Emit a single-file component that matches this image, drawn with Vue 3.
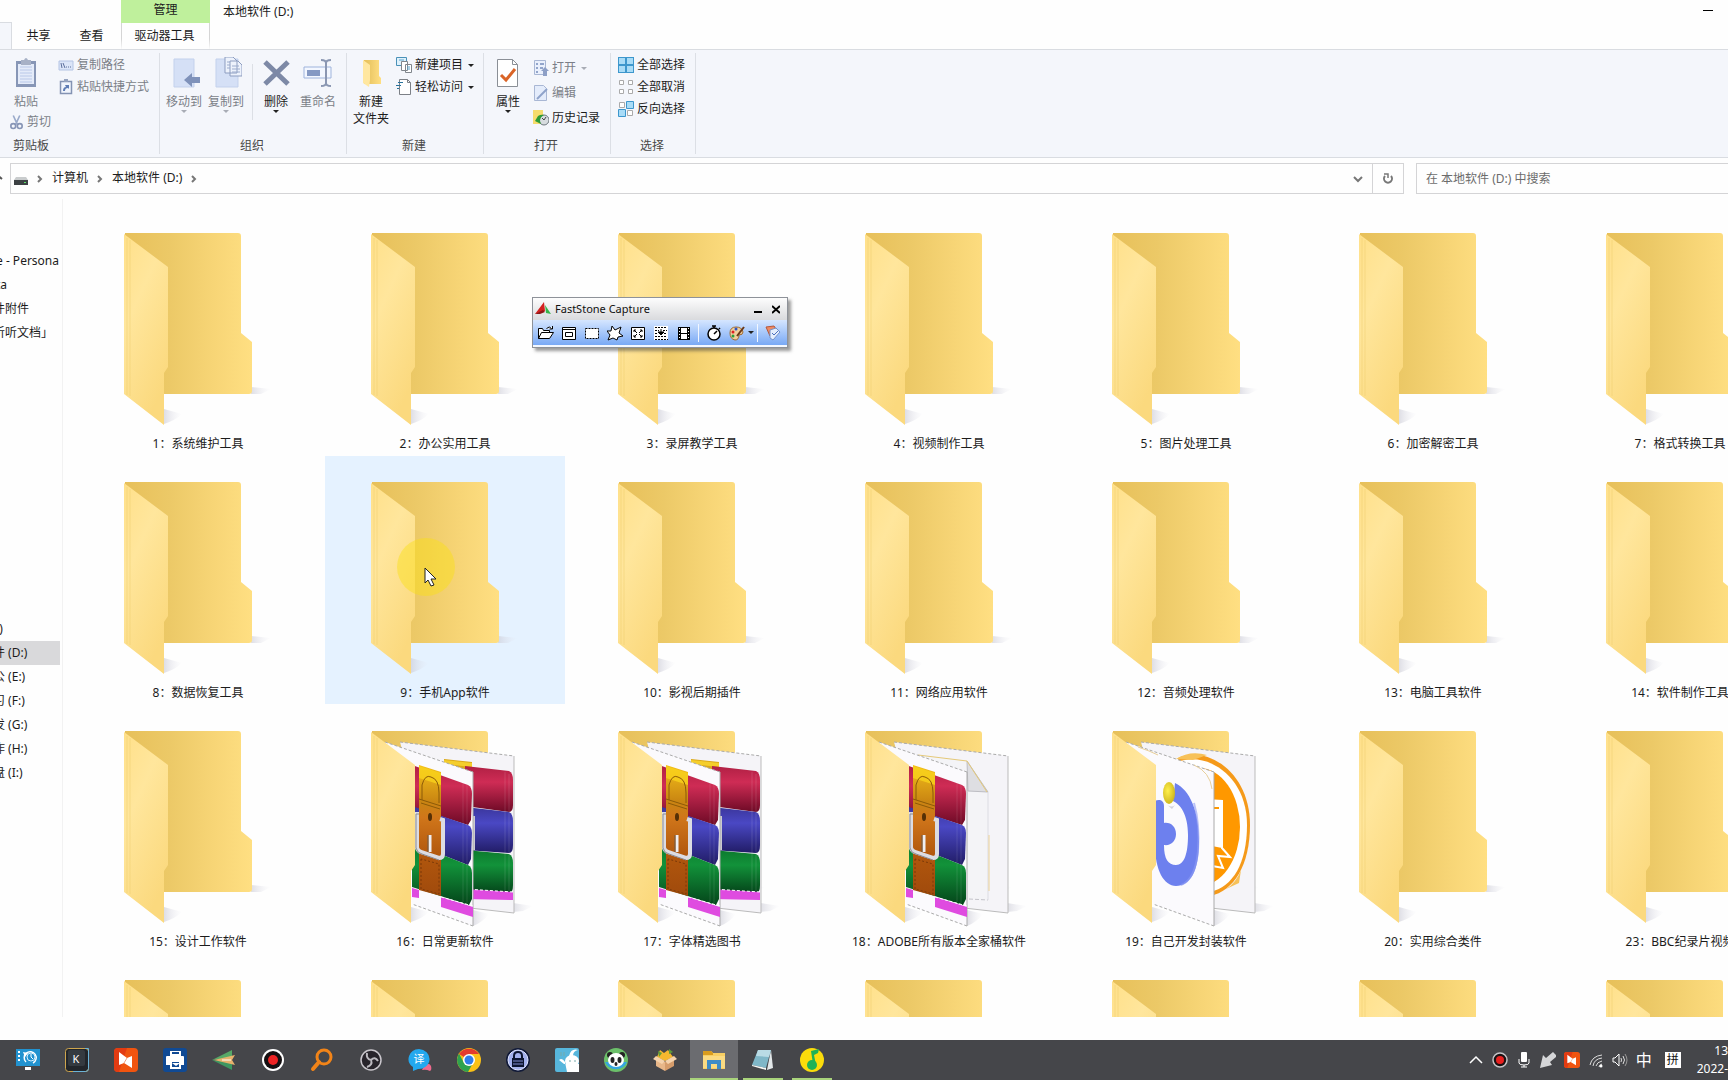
<script setup>
import { ref } from 'vue'

const search = ref('')
const hovered = ref(8)

const quickLinks = [
    { text: 'e - Persona', latin: true },
    { text: 'ta', latin: true },
    { text: '件附件' },
    { text: '听听文档」' },
]
const drives = ['  )', '件 (D:)', '公 (E:)', '习 (F:)', '发 (G:)', '作 (H:)', '盘 (I:)']

const folders = [
    { name: '1：系统维护工具' },
    { name: '2：办公实用工具' },
    { name: '3：录屏教学工具' },
    { name: '4：视频制作工具' },
    { name: '5：图片处理工具' },
    { name: '6：加密解密工具' },
    { name: '7：格式转换工具' },
    { name: '8：数据恢复工具' },
    { name: '9：手机App软件' },
    { name: '10：影视后期插件' },
    { name: '11：网络应用软件' },
    { name: '12：音频处理软件' },
    { name: '13：电脑工具软件' },
    { name: '14：软件制作工具' },
    { name: '15：设计工作软件' },
    { name: '16：日常更新软件', kind: 'rar' },
    { name: '17：字体精选图书', kind: 'rar' },
    { name: '18：ADOBE所有版本全家桶软件', kind: 'doc' },
    { name: '19：自己开发封装软件', kind: 'app' },
    { name: '20：实用综合类件' },
    { name: '23：BBC纪录片视频' },
    {}, {}, {}, {}, {}, {}, {},
]

const captureTools = ['open', 'window', 'rect', 'star', 'full', 'scroll', 'film']

const apps = [
    { id: 'backup' }, { id: 'keyk', glyph: 'K' }, { id: 'kl' }, { id: 'printer' }, { id: 'plane' },
    { id: 'rec' }, { id: 'find' }, { id: 'obs' }, { id: 'trans', glyph: '译' }, { id: 'chrome' },
    { id: 'lock' }, { id: 'rabbit' }, { id: 'panda' }, { id: 'box' },
    { id: 'explorer', state: 'active' }, { id: 'notes', state: 'running' }, { id: 'music', state: 'running' },
]
</script>

<template>
    <!-- shared icon shapes -->
    <svg class="defs" width="0" height="0" aria-hidden="true">
        <defs>
            <linearGradient id="gBack" x1="0" y1="0" x2="1" y2="0">
                <stop offset="0" stop-color="#e7c05a" />
                <stop offset=".35" stop-color="#ecc967" />
                <stop offset=".7" stop-color="#f7d576" />
                <stop offset="1" stop-color="#ffdf82" />
            </linearGradient>
            <linearGradient id="gFront" x1="0" y1="0" x2=".5" y2="1">
                <stop offset="0" stop-color="#ffe08a" />
                <stop offset=".4" stop-color="#ffe69c" />
                <stop offset="1" stop-color="#fbd97e" />
            </linearGradient>
            <linearGradient id="gShade" x1="0" y1="0" x2="1" y2="0">
                <stop offset="0" stop-color="#c9c9d4" stop-opacity=".6" />
                <stop offset="1" stop-color="#e5e5ee" stop-opacity="0" />
            </linearGradient>
            <linearGradient id="gRed" x1="0" y1="0" x2="0" y2="1">
                <stop offset="0" stop-color="#b02044" />
                <stop offset=".35" stop-color="#cf2c55" />
                <stop offset="1" stop-color="#6e0a26" />
            </linearGradient>
            <linearGradient id="gBlue" x1="0" y1="0" x2="0" y2="1">
                <stop offset="0" stop-color="#3b369c" />
                <stop offset=".35" stop-color="#4a48c4" />
                <stop offset="1" stop-color="#211c66" />
            </linearGradient>
            <linearGradient id="gGreen" x1="0" y1="0" x2="0" y2="1">
                <stop offset="0" stop-color="#0d7a2e" />
                <stop offset=".35" stop-color="#12923a" />
                <stop offset="1" stop-color="#04451a" />
            </linearGradient>
            <linearGradient id="gStrap" x1="0" y1="0" x2="0" y2="1">
                <stop offset="0" stop-color="#f3c01a" />
                <stop offset=".28" stop-color="#c98512" />
                <stop offset=".4" stop-color="#d0761a" />
                <stop offset=".7" stop-color="#b0560d" />
                <stop offset="1" stop-color="#a04a0c" />
            </linearGradient>
            <radialGradient id="gTime" cx=".4" cy=".4" r=".6">
                <stop offset="0" stop-color="#fff04a" />
                <stop offset="1" stop-color="#d0b820" />
            </radialGradient>
        </defs>

        <symbol id="f-back" viewBox="0 0 240 224">
            <path d="M173 187v-7l20 2-10 5z" fill="url(#gShade)" />
            <path d="M47 26h113q3 0 3 3v97l11 9v49q0 3-3 3H47z" fill="url(#gBack)" />
        </symbol>
        <symbol id="f-front" viewBox="0 0 240 224">
            <path d="M86 217v-15l18 5q-6 6-18 10z" fill="url(#gShade)" />
            <path d="M46 27l44 33v100l-4 6v52l-40-31z" fill="url(#gFront)" />
            <path d="M49 31v157M52 33v156" stroke="#eecb6a" stroke-width="1" opacity=".45" />
        </symbol>
        <symbol id="f-pages-back" viewBox="0 0 240 224">
            <path d="M188 207v-9l20 3-10 5z" fill="url(#gShade)" />
            <path d="M75 37l114 14v157l-70-8z" fill="#f5f4f8" />
            <path d="M75 37l114 14" stroke="#aaa" stroke-dasharray="3 2" fill="none" />
            <path d="M189 51v157l-44-5" stroke="#bbb" stroke-width="1" fill="none" />
        </symbol>
        <symbol id="f-page-front" viewBox="0 0 240 224">
            <path d="M148 221v-16l16 4q-6 8-16 12z" fill="url(#gShade)" />
            <path d="M60 37l88 30v154l-61-22z" fill="#fbfafd" />
            <path d="M60 37l88 30M148 221l-61-22" stroke="#aaa" stroke-dasharray="3 2" fill="none" />
            <path d="M148 67v154" stroke="#aaa" />
        </symbol>
        <symbol id="f-books-back" viewBox="0 0 240 224">
            <path d="M119 54l28 3v14h-28z" fill="#dba818" />
            <path d="M119 55l28 3v4l-28-3z" fill="#f5ce2c" />
            <path d="M140 61l44 5q4 2 4 9v25q0 7-4 7l-44-6z" fill="url(#gRed)" />
            <path d="M140 102l44 5q4 2 4 9v24q0 8-4 8l-44-3z" fill="url(#gBlue)" />
            <path d="M140 145l44 4q4 2 4 9v22q0 8-4 8h-44z" fill="url(#gGreen)" />
            <path d="M140 184l48 3v8l-48-1z" fill="#df4be0" />
            <path d="M140 184l48 3" stroke="#fff" stroke-dasharray="3 2" />
            <path d="M180 67v120M184 69v117" stroke="#fff" opacity=".12" />
            <path d="M149 111v34" stroke="#c9c9d0" stroke-width="2" />
        </symbol>
        <symbol id="f-books-front" viewBox="0 0 240 224">
            <path d="M87 60l56 20q4 2 4 9l-1 26-3 5-56-18z" fill="url(#gRed)" />
            <path d="M87 101l56 19q4 2 4 8l-1 26-3 6-56-22z" fill="url(#gBlue)" />
            <path d="M87 138l56 22q4 2 4 8v26l-3 6-57-18z" fill="url(#gGreen)" />
            <path d="M87 183l7 2v8l-7-1zM116 192l32 10v10l-32-10z" fill="#df4be0" />
            <path d="M116 192l32 9" stroke="#fff" stroke-dasharray="3 2" />
            <path d="M138 78v119M142 80v118" stroke="#fff" opacity=".1" />
            <path d="M94 60l22 7v124l-22-6z" fill="url(#gStrap)" />
            <path d="M94 61l22 7v12l-22-7z" fill="#f9d21c" opacity=".8" />
            <path d="M97 95V80q3-11 9-8 8 2 8 16v10M94 94l22 7M96 98l19 6" fill="none" stroke="#8c5a08" />
            <path d="M96 154v30l18 5v-30z" fill="none" stroke="#7b3908" stroke-dasharray="2 2" />
            <path d="M94 109h-2v34q1 3 4 4l18 6q4 0 4-4v-34l-3-1" fill="none" stroke="#dcdce2" stroke-width="4" />
            <path d="M94 109h-3v34q1 5 6 6l17 6" fill="none" stroke="#8b8b92" />
            <ellipse cx="105" cy="112" rx="2" ry="4" fill="#553006" />
            <path d="M105 130v17" stroke="#eeeef2" stroke-width="3" />
            <path d="M103 130v17" stroke="#6b5a4a" />
        </symbol>
        <symbol id="f-doc" viewBox="0 0 240 224">
            <path d="M99 50l49 6 21 32v107l-30-2z" fill="#f4f4f7" />
            <path d="M148 56l21 31-20-1z" fill="#dedee2" stroke="#bdbdc3" />
            <path d="M99 50l49 6 20 31" fill="none" stroke="#e5c979" />
            <path d="M150 194l19 1" stroke="#c4c4ca" stroke-dasharray="4 2" />
            <path d="M169 87v108" stroke="#dcdce2" />
            <path d="M170 130v56" stroke="#ecd296" />
        </symbol>
        <symbol id="f-orange" viewBox="0 0 240 224">
            <path d="M112 53C140 40 184 66 184 120c0 40-16 66-40 71z" fill="#f59a1a" />
            <path d="M112 57C140 46 181 70 181 120c0 38-14 62-37 67z" fill="#fff" />
            <path d="M110 54q14-9 31-4l-14 5zM160 184q10-6 15-19l-2 13z" fill="#f7c158" />
            <ellipse cx="133" cy="122" rx="41" ry="59" fill="#ff9800" />
            <path d="M140 95l16 1v47l8 9-12-1 5 12-16-3M149 102h4" fill="none" stroke="#fff" stroke-width="2" />
            <path d="M141 95l15 1v47l-15-3z" fill="#fff" />
            <path d="M148 103h5" stroke="#ff9800" stroke-width="2" />
        </symbol>
        <symbol id="f-blue" viewBox="0 0 240 224">
            <path d="M109 78C124 85 133 106 133 137c0 29-9 44-23 44-12 0-21-16-21-41V96c4-2 9-1 9 5v17c7-1 12 4 12 11s-5 12-12 11c0 14 4 20 12 20 8 0 12-11 12-30 0-21-8-31-15-34z" fill="#6d80ee" />
            <path d="M128 98q6 21 4 48-3 29-17 34" fill="none" stroke="#8d9bf4" stroke-width="2" opacity=".6" />
            <ellipse cx="103" cy="88" rx="6" ry="11" fill="url(#gTime)" />
            <path d="M99 98q6 6 10 2l-3 4z" fill="#b8b8c4" opacity=".6" />
            <path d="M72 42q12 4 20 8M128 60q16 7 18 24" fill="none" stroke="#e8cf9a" />
        </symbol>

        <!-- ribbon -->
        <symbol id="paste" viewBox="0 0 32 32">
            <path d="M6 4h20v26H6z" fill="#8796b6" />
            <path d="M8 7h16v20H8z" fill="#e4ebf9" />
            <path d="M10 10h12M10 13h12M10 16h12M10 19h12M10 22h12M10 25h12" stroke="#b9c8e8" />
            <path d="M11 3h3q2-4 4 0h3v5H11z" fill="#a7b1c6" />
        </symbol>
        <symbol id="cut" viewBox="0 0 16 18">
            <path d="M4 1l5 11M12 1L7 12" stroke="#9aaaca" stroke-width="2" fill="none" />
            <circle cx="4" cy="14" r="3" fill="none" stroke="#8795b6" stroke-width="2" />
            <circle cx="12" cy="14" r="3" fill="none" stroke="#8795b6" stroke-width="2" />
        </symbol>
        <symbol id="path" viewBox="0 0 16 16">
            <path d="M1 4h14v9H1z" fill="#dbe5f8" stroke="#b4c4e4" />
            <path d="M3 6l1 5M5 6l2 5M8 10h1M10 10h1M12 10h1" stroke="#5b6e9c" />
        </symbol>
        <symbol id="shortcut" viewBox="0 0 16 16">
            <path d="M2.500 2.500h11v12h-11z" fill="#f1f5fd" stroke="#8493b3" stroke-width="1.500" />
            <path d="M6 0h4v3H6z" fill="#95a3bf" />
            <path d="M5 12q0-4 3-4L7 6h4v4l-1-1q-3 0-3 3z" fill="#5f7db5" />
        </symbol>
        <symbol id="move" viewBox="0 0 32 32">
            <path d="M6 2h20v28H6z" fill="#d5e0f6" stroke="#c3d1ec" />
            <path d="M16 23l8-7v4h8v6h-8v4z" fill="#7f92ba" />
        </symbol>
        <symbol id="copy" viewBox="0 0 32 32">
            <path d="M6 2h22v28H6z" fill="#d5e0f6" stroke="#c3d1ec" />
            <path d="M15 0h8l4 4v12H15zM20 4h8l4 4v11H20z" fill="#edf2fc" stroke="#8d9dc0" />
            <path d="M17 5h3M17 8h3M17 11h3M22 9h7M22 12h8M22 15h8" stroke="#9caccd" />
        </symbol>
        <symbol id="delete" viewBox="0 0 32 32">
            <path d="M5 5l23 22M28 5L5 27" stroke="#7d89a6" stroke-width="5" />
        </symbol>
        <symbol id="rename" viewBox="0 0 32 32">
            <path d="M2 10h27v11H2z" fill="#f3f7ff" stroke="#9fb4dc" stroke-width="1" />
            <path d="M5 13h13v6H5z" fill="#8599c3" />
            <path d="M19 3q5 0 5 3 0-3 5-3M24 5v22M19 29q5 0 5-3 0 3 5 3" fill="none" stroke="#8b97b2" stroke-width="2" />
        </symbol>
        <symbol id="newfolder" viewBox="0 0 32 32">
            <path d="M9 3h15v16l2 2v6H9z" fill="url(#gBack)" />
            <path d="M8 3l7 5v15l-1 7-6-4z" fill="#ffe7a0" />
        </symbol>
        <symbol id="newitem" viewBox="0 0 16 16">
            <path d="M.5.5h10v8H.5z" fill="#dff1fb" stroke="#4a91b8" />
            <path d="M5.500 4.500h6v9h-6zM9.500 7.500h6v8h-6z" fill="#fff" stroke="#80868d" />
            <path d="M3 3h5M11 10h3M11 12h3" stroke="#5ba4cc" />
        </symbol>
        <symbol id="easy" viewBox="0 0 16 16">
            <path d="M3.500.5h8l3 3v12h-11z" fill="#fff" stroke="#7c8086" />
            <path d="M11.500.5v3h3" fill="none" stroke="#7c8086" />
            <path d="M2 3.500h5M0 6.500h5M1 9.500h2" stroke="#28739c" stroke-width="1" />
        </symbol>
        <symbol id="props" viewBox="0 0 32 32">
            <path d="M5.500 2.500h15l5 5v22h-20z" fill="#fff" stroke="#8a8f96" />
            <path d="M20.500 2.500v5h5" fill="none" stroke="#8a8f96" />
            <path d="M9 18l5 5 9-11" fill="none" stroke="#da6427" stroke-width="3" />
        </symbol>
        <symbol id="openicon" viewBox="0 0 16 16">
            <path d="M1.500.5h11v14h-11z" fill="#eaf0fc" stroke="#a9b7d4" />
            <path d="M3 3h2v2H3zM3 7h2v2H3zM3 11h2v2H3zM7 3h4v2H7zM7 7h3v2H7z" fill="#92a5cb" />
            <path d="M8 11l4-4 4 4h-2v5h-4v-5z" fill="#8d9fc6" />
        </symbol>
        <symbol id="edit" viewBox="0 0 16 16">
            <path d="M1.500.5h9l3 3v12h-12z" fill="#e4ecfb" stroke="#a9b7d4" />
            <path d="M4 14L14 4" stroke="#8fa3ca" stroke-width="2" />
        </symbol>
        <symbol id="history" viewBox="0 0 16 16">
            <path d="M0 0h10v14H0z" fill="#f6dc6d" />
            <circle cx="11" cy="10" r="5" fill="#d7dcdf" stroke="#6d777d" />
            <path d="M11 10l2-3M9 8l2 2" stroke="#444" fill="none" />
            <path d="M2 11l3-5q3-2 6-1-4 2-4 6l1 3z" fill="#2e9b36" />
        </symbol>
        <symbol id="selall" viewBox="0 0 16 16">
            <path d="M0 0h16v16H0z" fill="#3d97cd" />
            <path d="M1 1h6v6H1zM9 1h6v6H9zM1 9h6v6H1zM9 9h6v6H9z" fill="#a9dcf7" />
        </symbol>
        <symbol id="selnone" viewBox="0 0 16 16">
            <path d="M1.500 1.500h4v4h-4zM10.500 1.500h4v4h-4zM1.500 10.500h4v4h-4zM10.500 10.500h4v4h-4z" fill="#fff" stroke="#aaa" />
        </symbol>
        <symbol id="selinv" viewBox="0 0 16 16">
            <path d="M1.500 1.500h5v5h-5zM9.500 9.500h5v5h-5z" fill="#fff" stroke="#aaa" />
            <path d="M8.500.5h7v7h-7zM.5 8.500h7v7h-7z" fill="#a9dcf7" stroke="#3d97cd" />
        </symbol>
        <symbol id="chev" viewBox="0 0 8 10">
            <path d="M2 2l3 3-3 3" fill="none" stroke="#777" stroke-width="2" />
        </symbol>

        <!-- capture toolbar -->
        <symbol id="c-open" viewBox="0 0 16 16">
            <path d="M.5 13.500v-10h4l1 2h6v2M.5 13.500l3-6h12l-4 6zM8.500 3.500q3-3 5 0M14.500 1v3h-3" fill="#fff" stroke="#000" />
        </symbol>
        <symbol id="c-window" viewBox="0 0 16 16">
            <path d="M1.500 2.500h13v12h-13z" fill="#fff" stroke="#000" />
            <path d="M1 4.500h14M4.500 7.500h7v4h-7z" fill="none" stroke="#000" stroke-width="1" />
        </symbol>
        <symbol id="c-rect" viewBox="0 0 16 16">
            <path d="M1.500 3.500h13v10h-13z" fill="#fff" stroke="#000" stroke-dasharray="2 1" />
        </symbol>
        <symbol id="c-star" viewBox="0 0 16 16">
            <path d="M5 1l3 4 6-3-2 6 4 3-5 1-1 3-4-2-5 2 2-5-3-4h4z" fill="#fff" stroke="#000" />
        </symbol>
        <symbol id="c-full" viewBox="0 0 16 16">
            <path d="M1.500 2.500h13v12h-13z" fill="#fff" stroke="#000" />
            <path d="M4 5l3 3M12 5L9 8M4 12l3-3M12 12L9 9M4 7V5h2M10 5h2v2M4 10v2h2M10 12h2v-2" fill="none" stroke="#000" />
        </symbol>
        <symbol id="c-scroll" viewBox="0 0 16 16">
            <path d="M1 1h14v14H1z" fill="#fff" />
            <path d="M2 2.500h12M2 5.500h4M10 5.500h4M2 8.500h3M11 8.500h3M2 11.500h12M2 14.500h13" stroke="#000" stroke-dasharray="2 1" />
            <path d="M8 4v5M5 7l3 3 3-3z" fill="#000" stroke="#000" />
        </symbol>
        <symbol id="c-film" viewBox="0 0 16 16">
            <path d="M2 2h3v13H2zM11 2h3v13h-3z" fill="#000" />
            <path d="M5 3h6v11H5z" fill="#fff" />
            <path d="M5 8.500h6M5 2.500h6M5 14.500h6" stroke="#000" />
            <path d="M3.500 3v12M12.500 3v12" stroke="#fff" stroke-dasharray="1 2" />
        </symbol>
        <symbol id="c-timer" viewBox="0 0 16 16">
            <circle cx="8" cy="9" r="6" fill="#fff" stroke="#000" stroke-width="1.500" />
            <path d="M8 9l3-3M6 1h4M8 1v2M13 3l1 1" stroke="#000" stroke-width="1.500" />
        </symbol>
        <symbol id="c-palette" viewBox="0 0 16 16">
            <path d="M1 8q0-6 6-6t7 5q0 3-4 3 0 5-4 5Q1 14 1 8z" fill="#f1cf9c" stroke="#9c6a32" />
            <circle cx="4" cy="7" r="1.500" fill="#d22" />
            <circle cx="7" cy="4" r="1.500" fill="#2a53c8" />
            <circle cx="4" cy="11" r="1.500" fill="#29a03a" />
            <path d="M15 2l-7 9" stroke="#6b3a17" stroke-width="2" />
        </symbol>
        <symbol id="c-cfg" viewBox="0 0 16 16">
            <path d="M1 2l8-1 2 3-6 7z" fill="#ee8a63" stroke="#b3573b" />
            <path d="M5 5l6-2 4 4-7 8-3-2z" fill="#e4eefc" stroke="#7592c9" />
            <path d="M7 8l2 2 4-4" fill="none" stroke="#4a6fbd" />
        </symbol>

        <!-- taskbar -->
        <symbol id="t-backup" viewBox="0 0 24 24">
            <path d="M0 1h24v17H0z" fill="#2292cf" />
            <path d="M9 19h6v3H9z" fill="#fff" />
            <path d="M2 3h2v2H2zM2 7h2v2H2zM2 11h2v2H2z" fill="#fff" />
            <path d="M10 14A6 6 0 1 1 17 15" fill="none" stroke="#fff" stroke-width="1.500" />
            <circle cx="15" cy="9" r="4" fill="#2292cf" stroke="#d8efff" />
            <path d="M15 6v3l2 2" stroke="#fff" fill="none" />
            <path d="M7 4l5 1-3 4z" fill="#fff" />
        </symbol>
        <symbol id="t-keyk" viewBox="0 0 24 24">
            <rect x=".5" y=".5" width="23" height="23" rx="3" fill="#22262b" stroke="#cfa64e" />
            <path d="M20 .5h3.500v20q0 3-3 3H8" fill="none" stroke="#6ab3d8" />
            <rect x="3" y="2" width="17" height="16" rx="2" fill="#343a40" />
        </symbol>
        <symbol id="t-kl" viewBox="0 0 24 24">
            <rect width="24" height="24" rx="4" fill="#f0540f" />
            <path d="M0 4q0-4 4-4h9L5 24H4q-4 0-4-4z" fill="#e23b12" />
            <path d="M5 4l8 6 5-2v12l-8-5-5 2z" fill="#fff" />
            <path d="M13 10l-3 5" stroke="#f0a080" />
        </symbol>
        <symbol id="t-printer" viewBox="0 0 24 24">
            <rect width="24" height="24" rx="3" fill="#104a94" />
            <path d="M7 3h11v5H7zM4 8q-1 0-1 1v8h4v-3h11v3h3V9q0-1-1-1z" fill="#fff" />
            <path d="M8 14v6h9v-6" fill="none" stroke="#fff" stroke-width="2" />
            <path d="M9 5h7" stroke="#104a94" stroke-width="2" />
            <path d="M9 15l4 3 4-3z" fill="#fff" />
        </symbol>
        <symbol id="t-plane" viewBox="0 0 24 24">
            <path d="M0 12L20 2v8z" fill="#57a867" />
            <path d="M0 12l20 10v-8z" fill="#3e9661" />
            <path d="M2 12l21-5-3 5 3 5z" fill="#e7b26d" />
            <path d="M10 12h9" stroke="#fff" stroke-width="1" />
        </symbol>
        <symbol id="t-rec" viewBox="0 0 24 24">
            <circle cx="12" cy="12" r="11" fill="#fff" />
            <circle cx="12" cy="12" r="9" fill="#151012" />
            <circle cx="12" cy="12" r="5" fill="#ee2324" />
        </symbol>
        <symbol id="t-find" viewBox="0 0 24 24">
            <circle cx="14" cy="9" r="7" fill="none" stroke="#f28418" stroke-width="3" />
            <path d="M9 14l-6 7" stroke="#f28418" stroke-width="4" stroke-linecap="round" />
        </symbol>
        <symbol id="t-obs" viewBox="0 0 24 24">
            <circle cx="12" cy="12" r="10" fill="#27242b" stroke="#c9c6cc" stroke-width="1.500" />
            <path d="M12 12q-5-1-4-7M12 12q4-4 7 1M12 12q2 5-4 7" fill="none" stroke="#bcbac0" stroke-width="2" />
        </symbol>
        <symbol id="t-trans" viewBox="0 0 24 24">
            <path d="M17 16q5-1 6 2 1 4-1 5-4-2-8-1z" fill="#ef6a8e" />
            <path d="M11 1a11 10 0 1 1-1 20l-5 2v-4A11 10 0 0 1 11 1z" fill="#23a8ee" />
        </symbol>
        <symbol id="t-chrome" viewBox="0 0 24 24">
            <circle cx="12" cy="12" r="12" fill="#fbc116" />
            <path d="M12 12L2 6A12 12 0 0 1 22 6H12z" fill="#e33b2e" />
            <path d="M2 5.500A12 12 0 0 0 11 24l5-9-9 0z" fill="#2fa24f" />
            <circle cx="12" cy="12" r="6" fill="#fff" />
            <circle cx="12" cy="12" r="4.500" fill="#2f7de9" />
        </symbol>
        <symbol id="t-lock" viewBox="0 0 24 24">
            <circle cx="12" cy="12" r="11" fill="#a3b1ee" stroke="#111a38" stroke-width="2" />
            <circle cx="12" cy="12" r="10" fill="none" stroke="#dfe5ff" />
            <path d="M8 11V8q0-4 4-4t4 4v3" fill="none" stroke="#0c1530" stroke-width="2" />
            <path d="M6 10h12v9H6z" fill="#0c1530" />
            <path d="M7 13h10M7 16h10" stroke="#7e8cd0" />
        </symbol>
        <symbol id="t-rabbit" viewBox="0 0 24 24">
            <rect width="24" height="24" rx="2" fill="#57b6dc" />
            <ellipse cx="17" cy="13" rx="7" ry="6" fill="#fff" />
            <path d="M14 8q2-8 9-6-5 1-5 6zM4 12q3-3 6 2l2 10h12v-8H9z" fill="#fff" />
            <path d="M14 13h2M19 13h2M6 4v4M9 4v4" stroke="#7aa" />
        </symbol>
        <symbol id="t-panda" viewBox="0 0 24 24">
            <circle cx="12" cy="12" r="12" fill="#6cc06a" />
            <path d="M1 14a12 12 0 0 0 22 0z" fill="#35a5df" />
            <circle cx="6" cy="7" r="3" fill="#222" />
            <circle cx="18" cy="7" r="3" fill="#222" />
            <ellipse cx="12" cy="12" rx="8" ry="7" fill="#fff" />
            <ellipse cx="8.500" cy="12" rx="2" ry="3" fill="#222" />
            <ellipse cx="15.500" cy="12" rx="2" ry="3" fill="#222" />
            <ellipse cx="12" cy="16" rx="1.500" ry="2" fill="#222" />
        </symbol>
        <symbol id="t-box" viewBox="0 0 24 24">
            <path d="M4 9l3-7 4 3 4-3 5 7-8 4z" fill="#f5b82f" />
            <path d="M5 3l4 2-3 4zM16 1l4 3-4 2z" fill="#5c9b3a" />
            <path d="M3 9l9 5v9l-9-5z" fill="#e8b789" />
            <path d="M21 9l-9 5v9l9-5z" fill="#d59c6b" />
            <path d="M3 8l-3 3 9 5 3-3zM21 8l3 3-9 5-3-3z" fill="#f5d3ad" />
        </symbol>
        <symbol id="t-explorer" viewBox="0 0 24 24">
            <path d="M1 3h8l2 2h12v16H1z" fill="#f8cf63" />
            <path d="M1 3h8l2 2v2H1z" fill="#d99c1e" />
            <path d="M1 8h22v12H1z" fill="#fbdb82" />
            <path d="M5 21v-9h14v9h-4v-5H9v5z" fill="#3e8cc7" />
        </symbol>
        <symbol id="t-notes" viewBox="0 0 24 24">
            <path d="M20 2l2 18-6 2z" fill="#e3e8ea" />
            <path d="M7 2h13l-5 18-14-3z" fill="#7fb7c8" />
            <path d="M7 2h13l-2 7-13-1z" fill="#b9dbe5" />
            <path d="M1 17l14 3v2L1 18z" fill="#f7f7f4" />
        </symbol>
        <symbol id="t-music" viewBox="0 0 24 24">
            <circle cx="12" cy="12" r="12" fill="#fbdc0b" />
            <path d="M11 3l8-2-1 4-4 2 2 10-3-1z" fill="#1fb257" />
            <circle cx="12" cy="17" r="5" fill="#1fb257" />
        </symbol>
    </svg>

    <div class="screen">
        <header class="titlebar">
            <div class="file-tab"></div>
            <button class="tab">共享</button>
            <button class="tab">查看</button>
            <div class="context">
                <div class="context-head">管理</div>
                <button class="context-tab">驱动器工具</button>
            </div>
            <h1 class="title">本地软件 (D:)</h1>
            <button class="minimize" aria-label="最小化"><span></span></button>
        </header>

        <section class="ribbon">
            <div class="group clipboard">
                <div class="group-body">
                    <div>
                        <button class="big off paste"><svg><use href="#paste" /></svg>粘贴</button>
                        <button class="small off cut"><svg><use href="#cut" /></svg>剪切</button>
                    </div>
                    <div class="rows">
                        <button class="small off"><svg><use href="#path" /></svg>复制路径</button>
                        <button class="small off"><svg><use href="#shortcut" /></svg>粘贴快捷方式</button>
                    </div>
                </div>
                <div class="group-name">剪贴板</div>
            </div>
            <div class="group organize">
                <div class="group-body">
                    <button class="big off"><svg><use href="#move" /></svg>移动到<i class="caret"></i></button>
                    <button class="big off"><svg><use href="#copy" /></svg>复制到<i class="caret"></i></button>
                    <div class="rule"></div>
                    <button class="big"><svg><use href="#delete" /></svg>删除<i class="caret"></i></button>
                    <button class="big off"><svg><use href="#rename" /></svg>重命名</button>
                </div>
                <div class="group-name">组织</div>
            </div>
            <div class="group create">
                <div class="group-body">
                    <button class="big"><svg><use href="#newfolder" /></svg>新建<br>文件夹</button>
                    <div class="rows">
                        <button class="small"><svg><use href="#newitem" /></svg>新建项目<i class="caret"></i></button>
                        <button class="small"><svg><use href="#easy" /></svg>轻松访问<i class="caret"></i></button>
                    </div>
                </div>
                <div class="group-name">新建</div>
            </div>
            <div class="group open">
                <div class="group-body">
                    <button class="big"><svg><use href="#props" /></svg>属性<i class="caret"></i></button>
                    <div class="rows">
                        <button class="small off"><svg><use href="#openicon" /></svg>打开<i class="caret"></i></button>
                        <button class="small off"><svg><use href="#edit" /></svg>编辑</button>
                        <button class="small"><svg><use href="#history" /></svg>历史记录</button>
                    </div>
                </div>
                <div class="group-name">打开</div>
            </div>
            <div class="group select">
                <div class="group-body">
                    <div class="rows">
                        <button class="small"><svg><use href="#selall" /></svg>全部选择</button>
                        <button class="small"><svg><use href="#selnone" /></svg>全部取消</button>
                        <button class="small"><svg><use href="#selinv" /></svg>反向选择</button>
                    </div>
                </div>
                <div class="group-name">选择</div>
            </div>
        </section>

        <nav class="address-row">
            <svg class="up" viewBox="0 0 10 31"><path d="M-3 12l5 4" fill="none" stroke="#555" stroke-width="2" /></svg>
            <div class="address">
                <svg class="drive" viewBox="0 0 14 8">
                    <path d="M2 0h10l2 3H0z" fill="#c9cccd" />
                    <path d="M0 3h14v5H0z" fill="#3c4143" />
                    <path d="M10 5h2v1h-2z" fill="#5ee06a" />
                </svg>
                <svg class="chev"><use href="#chev" /></svg>
                <a href="#">计算机</a>
                <svg class="chev"><use href="#chev" /></svg>
                <a href="#">本地软件 (D:)</a>
                <svg class="chev"><use href="#chev" /></svg>
                <button class="drop" aria-label="以前的位置">
                    <svg width="10" height="8" viewBox="0 0 10 8"><path d="M1 2l4 4 4-4" fill="none" stroke="#777" stroke-width="2" /></svg>
                </button>
                <button class="refresh" aria-label="刷新">
                    <svg width="12" height="12" viewBox="0 0 12 12">
                        <path d="M9 3a4 4 0 1 1-6 0" fill="none" stroke="#777" stroke-width="2" />
                        <path d="M2 1h4v4" fill="none" stroke="#777" stroke-width="1.500" />
                    </svg>
                </button>
            </div>
            <input v-model="search" class="search" type="text" aria-label="搜索" placeholder="在 本地软件 (D:) 中搜索">
        </nav>

        <main class="body">
            <aside class="sidebar">
                <a v-for="link in quickLinks" :key="link.text" href="#" :class="{ latin: link.latin }"><span>{{ link.text }}</span></a>
                <div class="drives">
                    <a v-for="(drive, i) in drives" :key="drive" href="#" :class="{ current: i === 1 }"><span>{{ drive }}</span></a>
                </div>
            </aside>
            <div class="files">
                <button v-for="(folder, i) in folders" :key="i" class="folder" :class="{ hovered: i === hovered }" :aria-label="folder.name || '文件夹'">
                    <svg viewBox="0 0 240 224">
                        <use href="#f-back" />
                        <template v-if="folder.kind">
                            <use href="#f-pages-back" />
                            <use v-if="folder.kind === 'rar'" href="#f-books-back" />
                            <use v-else-if="folder.kind === 'doc'" href="#f-doc" />
                            <use v-else href="#f-orange" />
                            <use href="#f-page-front" />
                            <use v-if="folder.kind === 'app'" href="#f-blue" />
                            <use v-else href="#f-books-front" />
                        </template>
                        <use href="#f-front" />
                    </svg>
                    <span class="folder-name">{{ folder.name }}</span>
                    <span v-if="i === hovered" class="halo">
                        <svg width="14" height="20" viewBox="0 0 14 20">
                            <path d="M1 1v15l3-3 3 6 3-1-3-6h5z" fill="#fff" stroke="#222" />
                        </svg>
                    </span>
                </button>
            </div>
        </main>
        <div class="status"></div>

        <footer class="taskbar">
            <button v-for="app in apps" :key="app.id" class="app" :class="app.state" :aria-label="app.id">
                <svg width="24" height="24" viewBox="0 0 24 24">
                    <use :href="'#t-' + app.id" />
                    <text v-if="app.glyph" x="11" y="15" font-size="11" text-anchor="middle" fill="#fff">{{ app.glyph }}</text>
                </svg>
            </button>
            <div class="tray">
                <svg viewBox="0 0 16 16"><path d="M2 11l6-6 6 6" fill="none" stroke="#fff" stroke-width="1.500" /></svg>
                <svg viewBox="0 0 16 16">
                    <circle cx="8" cy="8" r="7" fill="#1b1113" stroke="#c5c5c8" stroke-width="1.500" />
                    <circle cx="8" cy="8" r="4" fill="#e8201f" />
                </svg>
                <svg viewBox="0 0 16 16">
                    <rect x="5" y="0" width="6" height="10" rx="1" fill="#fff" />
                    <path d="M3 7v4q0 2 5 2t5-2V7M8 13v2M5 15h6" fill="none" stroke="#fff" stroke-width="1" />
                </svg>
                <svg viewBox="0 0 16 16">
                    <path d="M16 3l-3-3-7 6-3-3-3 13 12-3-2-3 6-5z" fill="#d5d6d8" />
                </svg>
                <svg viewBox="0 0 24 24"><use href="#t-kl" /></svg>
                <svg viewBox="0 0 16 16">
                    <path d="M2 13Q4 4 14 3M5 14q1-7 9-8M8 14q1-4 6-5M11 15q0-2 3-3" fill="none" stroke="#ddd" stroke-width="1" />
                    <circle cx="13" cy="14" r="1.500" fill="#fff" />
                </svg>
                <svg viewBox="0 0 16 16">
                    <path d="M1 6h2l4-4v12l-4-4H1z" fill="none" stroke="#fff" />
                    <path d="M9 6q1 2 0 4M11 4q3 4 0 8" fill="none" stroke="#ddd" />
                    <path d="M13 2q4 6 0 12" fill="none" stroke="#999" />
                </svg>
                <span class="lang">中</span>
                <span class="ime">拼</span>
                <div class="clock">13<br>2022-</div>
            </div>
        </footer>

        <div class="capture">
            <div class="capture-title">
                <svg width="16" height="14" viewBox="0 0 16 14">
                    <path d="M0 12L9 0l1 9-4 1z" fill="#d32120" />
                    <path d="M10 3l6 9-5-1z" fill="#35b44a" />
                    <path d="M0 12l8-4 2 2-5 2z" fill="#8f1515" />
                </svg>
                <span>FastStone Capture</span>
                <button aria-label="最小化"><svg width="8" height="10" viewBox="0 0 8 10"><path d="M0 8h8" stroke="#000" stroke-width="2" /></svg></button>
                <button aria-label="关闭"><svg width="8" height="10" viewBox="0 0 8 10"><path d="M0 2l8 7M8 2L0 9" stroke="#000" stroke-width="2" /></svg></button>
            </div>
            <div class="capture-tools">
                <button v-for="tool in captureTools" :key="tool" :aria-label="tool"><svg><use :href="'#c-' + tool" /></svg></button>
                <i class="split"></i>
                <button aria-label="timer"><svg><use href="#c-timer" /></svg></button>
                <button aria-label="palette"><svg><use href="#c-palette" /></svg></button>
                <i class="caret"></i>
                <i class="split"></i>
                <button aria-label="settings"><svg><use href="#c-cfg" /></svg></button>
            </div>
        </div>
    </div>
</template>

<style>
body {
    margin: 0;
    overflow: hidden;
}
</style>

<style scoped>
.defs {
    position: absolute;
}
.screen {
    position: relative;
    display: flex;
    flex-direction: column;
    height: 100vh;
    overflow: hidden;
    background: #fefefe;
    color: #1c1c1c;
    font: 12px/16px "Noto Sans", "Noto Sans CJK SC", sans-serif;
}
button {
    display: flex;
    align-items: center;
    justify-content: center;
    margin: 0;
    padding: 0;
    border: 0;
    background: none;
    color: inherit;
    font: inherit;
    white-space: nowrap;
}
a {
    color: inherit;
    text-decoration: none;
}
svg {
    display: block;
    flex: none;
}
.titlebar {
    display: flex;
    align-items: flex-end;
    height: 49px;
}
.file-tab {
    width: 11px;
    height: 26px;
    margin-top: -1px;
    border-top: 1px solid #d9dce1;
    border-right: 1px solid #d9dce1;
    background: #f4f6fb;
}
.tab {
    width: 53px;
    height: 26px;
}
.context {
    width: 89px;
    margin-left: 3px;
}
.context-head {
    height: 23px;
    line-height: 20px;
    background: #bff09c;
    text-align: center;
}
.context-tab {
    width: 100%;
    height: 26px;
    padding-right: 2px;
    border: 1px solid;
    border-width: 0 1px;
    border-image: linear-gradient(#d5d5d5 60%, #fefefe) 1;
}
.title {
    align-self: flex-start;
    margin: 4px 0 0 13px;
    font: inherit;
}
.minimize {
    align-self: flex-start;
    width: 40px;
    height: 21px;
    margin-left: auto;
}
.minimize span {
    width: 10px;
    height: 1px;
    background: #000;
}
.ribbon {
    display: flex;
    height: 107px;
    background: #f4f6fb;
    border-top: 1px solid #d9dce1;
    border-bottom: 1px solid #d9dce1;
}
.group {
    display: flex;
    flex-direction: column;
    box-sizing: border-box;
    margin: 3px 0;
    padding-top: 4px;
    border-right: 1px solid #dcdfe5;
}
.group-body {
    display: flex;
    height: 81px;
}
.group-name {
    padding-right: 2px;
    text-align: center;
    color: #484848;
}
.clipboard {
    width: 160px;
}
.clipboard .group-body {
    padding-left: 10px;
    gap: 7px;
}
.clipboard .group-name {
    padding-left: 13px;
    text-align: left;
}
.organize {
    width: 187px;
}
.organize .group-body {
    padding-left: 3px;
}
.create {
    width: 137px;
}
.create .group-body {
    padding-left: 3px;
    gap: 4px;
}
.open {
    width: 127px;
}
.open .group-body {
    padding-left: 3px;
    gap: 4px;
}
.open .rows {
    gap: 9px;
    padding-top: 3px;
}
.select {
    width: 85px;
}
.select .group-body {
    padding-left: 7px;
}
.big {
    flex-direction: column;
    justify-content: flex-start;
    width: 42px;
    line-height: 17px;
}
.big svg {
    width: 32px;
    height: 32px;
    margin-bottom: 4px;
}
.paste {
    width: 32px;
}
.rows {
    display: flex;
    flex-direction: column;
    gap: 6px;
}
.small {
    justify-content: flex-start;
    height: 16px;
    gap: 3px;
}
.small svg {
    width: 16px;
    height: 16px;
}
.cut {
    gap: 4px;
    margin-top: 4px;
}
.cut svg {
    width: 13px;
}
.off {
    color: #7b7f87;
}
.caret {
    flex: none;
    border: 3px solid transparent;
    border-top-color: #222;
    border-bottom: 0;
}
.off .caret {
    border-top-color: #a8acb5;
}
.small .caret {
    margin-left: 2px;
}
.rule {
    width: 1px;
    height: 56px;
    margin: 7px 2px 0 5px;
    background: #dcdfe5;
}
.address-row {
    display: flex;
    padding-top: 5px;
    height: 31px;
}
.up {
    width: 10px;
    height: 31px;
}
.address {
    display: flex;
    align-items: center;
    flex: 1;
    box-sizing: border-box;
    border: 1px solid #d4d4d6;
    padding-left: 3px;
}
.address a {
    margin-bottom: 2px;
}
.drive {
    width: 14px;
    height: 8px;
    margin-top: 4px;
}
.chev {
    width: 8px;
    height: 10px;
    margin: 0 8px;
}
.drop {
    width: 28px;
    height: 100%;
    margin-left: auto;
}
.refresh {
    width: 31px;
    height: 100%;
    border-left: 1px solid #d4d4d6;
}
.search {
    width: 312px;
    box-sizing: border-box;
    margin: 0 0 0 12px;
    padding: 0 9px;
    border: 1px solid #d4d4d6;
    border-right: 0;
    background: none;
    font: inherit;
    outline: 0;
}
.search::placeholder {
    color: #6c6c6c;
    opacity: 1;
}
.body {
    display: flex;
    flex: 1;
    min-height: 0;
    overflow: hidden;
    padding-top: 5px;
}
.sidebar {
    width: 62px;
    padding-top: 50px;
    border-right: 1px solid #f2f2f2;
}
.sidebar a {
    display: block;
    height: 24px;
    line-height: 24px;
    width: 60px;
    overflow: hidden;
    white-space: pre;
}
.sidebar span {
    margin-left: -7px;
}
.sidebar .latin span {
    margin-left: -4px;
}
.drives {
    margin-top: 272px;
}
.sidebar .current {
    background: #d9d9db;
}
.files {
    display: grid;
    flex: 1;
    min-width: 0;
    grid-template-columns: repeat(7, 240px);
    grid-auto-rows: 248px;
    gap: 1px 7px;
    padding: 8px 0 0 15px;
    overflow: hidden;
}
.folder {
    position: relative;
    flex-direction: column;
    justify-content: flex-start;
}
.folder > svg {
    width: 240px;
    height: 224px;
}
.folder-name {
    margin-top: 5px;
}
.hovered {
    background: #e5f2ff;
}
.halo {
    position: absolute;
    left: 72px;
    top: 82px;
    width: 58px;
    height: 58px;
    border-radius: 50%;
    background: rgba(250, 225, 20, 0.45);
}
.halo svg {
    margin: 29px 0 0 27px;
}
.status {
    height: 23px;
}
.taskbar {
    display: flex;
    height: 40px;
    padding-left: 4px;
    gap: 1px;
    background: #45464a;
    color: #fff;
}
.app {
    position: relative;
    width: 48px;
    height: 40px;
}
.active {
    background: #6b6c70;
}
.active::after,
.running::after {
    content: "";
    position: absolute;
    right: 4px;
    bottom: 0;
    left: 4px;
    height: 2px;
    background: #a9d47c;
}
.active::after {
    right: 0;
    left: 0;
}
.tray {
    display: flex;
    align-items: center;
    margin-left: auto;
}
.tray svg {
    width: 16px;
    height: 16px;
    margin-right: 8px;
}
.lang {
    font-size: 16px;
    margin-right: 13px;
}
.ime {
    width: 16px;
    background: #fff;
    color: #111;
    text-align: center;
    margin-right: 16px;
}
.clock {
    text-align: right;
    line-height: 18px;
}
.capture {
    position: absolute;
    left: 532px;
    top: 297px;
    width: 256px;
    height: 51px;
    box-sizing: border-box;
    border: 1px solid #8e9299;
    background: #e9eaec;
    box-shadow: 3px 3px 3px rgba(60, 60, 60, 0.5);
}
.capture-title {
    display: flex;
    align-items: center;
    height: 22px;
    padding: 0 7px 0 2px;
    gap: 10px;
    background: linear-gradient(#fdfdfd, #d9dadd);
}
.capture-title span {
    flex: 1;
    margin-left: -6px;
    color: #111;
    font-size: 11px;
}
.capture-tools {
    display: flex;
    align-items: center;
    height: 25px;
    padding-left: 1px;
    border-bottom: 2px solid #f4f8ff;
    background: linear-gradient(#d5e6ff, #79a9f5);
}
.capture-tools button {
    width: 23px;
    height: 24px;
}
.capture-tools svg {
    width: 16px;
    height: 16px;
}
.split {
    width: 1px;
    height: 18px;
    margin: 0 3px;
    background: #f2f7ff;
}
</style>
